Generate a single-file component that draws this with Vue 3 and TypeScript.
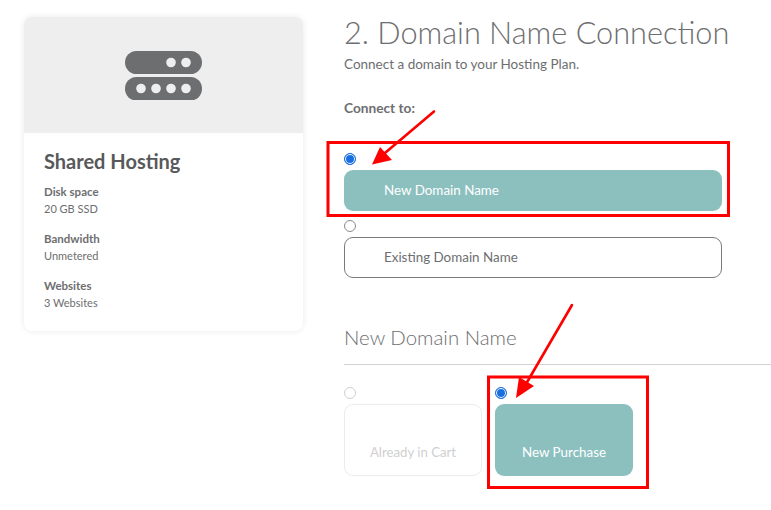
<script setup lang="ts">
const specs = [
  { label: 'Disk space', value: '20 GB SSD' },
  { label: 'Bandwidth', value: 'Unmetered' },
  { label: 'Websites', value: '3 Websites' },
]
</script>

<template>
  <div class="page">
    <aside class="card">
      <div class="card-top">
        <svg class="server" width="77" height="49" viewBox="0 0 77 49" aria-hidden="true">
          <rect x="0" y="0" width="77" height="23" rx="11.5" fill="#6d6e70" />
          <rect x="0" y="26" width="77" height="23.5" rx="11.5" fill="#6d6e70" />
          <circle cx="46" cy="11.5" r="4.8" fill="#eee" />
          <circle cx="61" cy="11.5" r="4.8" fill="#eee" />
          <circle cx="16" cy="37.5" r="4.8" fill="#eee" />
          <circle cx="31" cy="37.5" r="4.8" fill="#eee" />
          <circle cx="46" cy="37.5" r="4.8" fill="#eee" />
          <circle cx="61" cy="37.5" r="4.8" fill="#eee" />
        </svg>
      </div>
      <div class="card-body">
        <h2>Shared Hosting</h2>
        <dl>
          <div v-for="s in specs" :key="s.label" class="spec">
            <dt>{{ s.label }}</dt>
            <dd>{{ s.value }}</dd>
          </div>
        </dl>
      </div>
    </aside>

    <main class="main">
      <h1>2. Domain Name Connection</h1>
      <p class="sub">Connect a domain to your Hosting Plan.</p>
      <div class="connect">Connect to:</div>

      <div class="radio on first"></div>
      <div class="wide filled">New Domain Name</div>
      <div class="radio second"></div>
      <div class="wide outline">Existing Domain Name</div>

      <h3>New Domain Name</h3>
      <div class="rule"></div>

      <div class="options">
        <div class="option">
          <div class="radio faint"></div>
          <div class="tile disabled">Already in Cart</div>
        </div>
        <div class="option">
          <div class="radio on"></div>
          <div class="tile filled">New Purchase</div>
        </div>
      </div>
    </main>

    <svg class="marks" width="771" height="510" viewBox="0 0 771 510" aria-hidden="true">
      <rect x="328" y="142.5" width="400.5" height="73" fill="none" stroke="#ff0000" stroke-width="3" />
      <rect x="488.5" y="377" width="159" height="110.5" fill="none" stroke="#ff0000" stroke-width="3" />
      <line x1="434" y1="111.5" x2="382" y2="155.5" stroke="#ff0000" stroke-width="2.6" stroke-linecap="round" />
      <polygon points="372,164.5 380,147 392,160" fill="#ff0000" />
      <line x1="572" y1="305" x2="526" y2="384" stroke="#ff0000" stroke-width="2.6" stroke-linecap="round" />
      <polygon points="516,398 519,377 534,386" fill="#ff0000" />
    </svg>
  </div>
</template>

<style>
html, body { margin: 0; background: #fff; overflow: hidden; }
</style>

<style scoped>
.page {
  position: relative;
  display: flex;
  align-items: flex-start;
  width: 771px;
  height: 510px;
  overflow: hidden;
  background: #fff;
  font-family: Lato, "Open Sans", sans-serif;
  color: #6d6e70;
}
.card {
  width: 279px;
  height: 314px;
  margin: 17px 0 0 24px;
  border-radius: 8px;
  background: #fff;
  box-shadow: 0 0 6px rgba(0, 0, 0, 0.09);
  overflow: hidden;
  flex: none;
}
.card-top {
  height: 116px;
  background: #eee;
  display: flex;
  justify-content: center;
  padding-top: 34px;
  box-sizing: border-box;
}
.server { display: block; }
.card-body { padding: 17px 20px 0 20px; }
.card-body h2 {
  margin: 0;
  font-size: 20px;
  line-height: 22px;
  font-weight: 700;
  color: #58595b;
}
dl { margin: 12px 0 0; }
.spec { margin-bottom: 15px; }
dt {
  font-size: 11.5px;
  line-height: 15px;
  font-weight: 700;
}
dd {
  margin: 2px 0 0;
  font-size: 11px;
  line-height: 15px;
}
.main {
  width: 427px;
  margin-left: 41px;
  flex: none;
}
h1 {
  margin: 16px 0 0;
  font-size: 30.7px;
  line-height: 34px;
  font-weight: 300;
  color: #6d6e70;
  white-space: nowrap;
}
.sub {
  margin: 5px 0 0;
  font-size: 13.5px;
  line-height: 18px;
}
.connect {
  margin-top: 26px;
  font-size: 13.7px;
  line-height: 18px;
  font-weight: 700;
}
.radio {
  width: 12px;
  height: 12px;
  box-sizing: border-box;
  border-radius: 50%;
  border: 1px solid #8a8a8a;
  background: #fff;
}
.radio.faint { border-color: #d0d0d0; }
.radio.on {
  border: 1px solid #1a6fe0;
  background: #1a6fe0;
  box-shadow: inset 0 0 0 1px #fff;
}
.first { margin-top: 36px; }
.wide {
  width: 378px;
  height: 41px;
  box-sizing: border-box;
  border-radius: 9px;
  margin-top: 5px;
  padding-left: 40px;
  padding-bottom: 1px;
  display: flex;
  align-items: center;
  font-size: 13.4px;
}
.filled { background: #8cc0bf; color: #fff; }
.second { margin-top: 9px; }
.outline { border: 1px solid #7a7b7c; margin-top: 5px; padding-left: 39px; color: #6d6e70; }
h3 {
  margin: 47px 0 0;
  font-size: 20.4px;
  line-height: 24px;
  font-weight: 300;
  color: #6d6e70;
}
.rule {
  height: 1px;
  background: #d2d2d2;
  margin-top: 15px;
}
.options {
  display: flex;
  gap: 13px;
  margin-top: 22px;
}
.option { width: 138px; }
.tile {
  height: 72px;
  box-sizing: border-box;
  border-radius: 9px;
  margin-top: 5px;
  padding-top: 39px;
  text-align: center;
  font-size: 13.4px;
  line-height: 18px;
}
.tile.disabled {
  border: 1px solid #ececec;
  color: #cfcfcf;
  padding-top: 38px;
  font-size: 13.2px;
}
.marks {
  position: absolute;
  left: 0;
  top: 0;
  pointer-events: none;
}
</style>
